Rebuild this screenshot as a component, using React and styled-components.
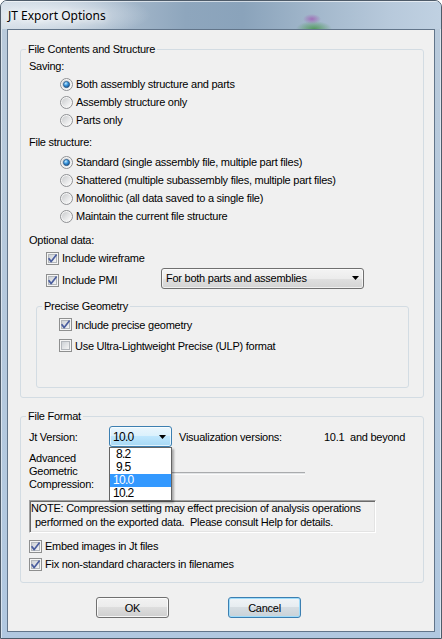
import React from 'react';
import styled, { createGlobalStyle } from 'styled-components';

const GlobalStyle = createGlobalStyle`
  html, body { margin: 0; padding: 0; background: #ffffff; }
  body { font-family: "Liberation Sans", Arial, sans-serif; }
  *, *::before, *::after { box-sizing: border-box; }
`;

const Window = styled.div`
  width: 442px;
  height: 639px;
  border: 1px solid #4e5b69;
  border-radius: 7px 7px 0 0;
  overflow: hidden;
  display: flex;
  flex-direction: column;
  background: #b3c9e0;
`;

const TitleBar = styled.div`
  height: 28px;
  flex: none;
  display: flex;
  align-items: center;
  padding-left: 7px;
  font-family: "Noto Sans", "Liberation Sans", sans-serif;
  font-size: 12px;
  color: #000;
  text-shadow: 0 0 6px rgba(255, 255, 255, 0.95), 0 0 10px rgba(255, 255, 255, 0.8);
  background:
    radial-gradient(ellipse 9px 5px at 311px 18px, rgba(160, 95, 180, 0.8), transparent),
    radial-gradient(ellipse 18px 8px at 313px 28px, rgba(70, 150, 75, 0.85), transparent),
    radial-gradient(ellipse 110px 24px at 40px 14px, rgba(236, 241, 246, 0.95), transparent),
    linear-gradient(90deg, #c9d5e0 0%, #aebfd0 22%, #8ea6bd 42%, #8aa3bb 55%, #a3b8cc 72%, #b7c9db 88%, #c0d1e2 100%);
  box-shadow: inset 0 1px 0 rgba(255, 255, 255, 0.6);
`;

const Frame = styled.div`
  flex: 1;
  display: flex;
  padding: 0 6px 6px;
  background: linear-gradient(180deg, #b9cadb 0%, #b1c8e0 100%);
  box-shadow: inset 1px 0 0 rgba(255, 255, 255, 0.5), inset -1px 0 0 rgba(255, 255, 255, 0.5);
`;

const Client = styled.div`
  flex: 1;
  display: flex;
  flex-direction: column;
  background: #f0f0f0;
  border: 1px solid #62758a;
  padding: 12px 10px 0 12px;
  font-size: 11px;
  letter-spacing: -0.25px;
  color: #000;
`;

const Group = styled.fieldset`
  margin: ${p => p.$mt || 0}px ${p => p.$mr || 0}px 0 ${p => p.$ml || 0}px;
  padding: 0;
  min-width: 0;
  border: 1px solid #d3dce3;
  border-radius: 3px;
`;

const Legend = styled.legend`
  margin-left: 5px;
  padding: 0 2px;
  line-height: 14px;
  font-size: 11px;
`;

const GroupBody = styled.div`
  display: flex;
  flex-direction: column;
  padding: ${p => p.$pt || 0}px 0 ${p => p.$pb || 0}px ${p => p.$pl || 8}px;
`;

const SectionLabel = styled.div`
  height: 18px;
  line-height: 18px;
  margin-top: ${p => p.$mt || 0}px;
`;

const OptionRow = styled.label`
  display: flex;
  align-items: center;
  gap: 3px;
  height: ${p => p.$h || 18}px;
  padding-left: ${p => p.$indent || 0}px;
  margin-top: ${p => p.$mt || 0}px;
  white-space: nowrap;
`;

const OptionList = styled.div`
  display: flex;
  flex-direction: column;
  margin-top: ${p => p.$mt || 0}px;
`;

const PmiRow = styled.div`
  display: flex;
  align-items: center;
  height: 22px;
`;

const PmiCheck = styled.label`
  display: flex;
  align-items: center;
  gap: 3px;
  width: 132px;
  flex: none;
  padding-left: 17px;
  margin-top: 4px;
`;

const Combo = styled.div`
  position: relative;
  width: ${p => p.$w}px;
  height: 21px;
  flex: none;
  display: flex;
  align-items: center;
  justify-content: space-between;
  padding: 0 ${p => p.$pr || 4}px 0 ${p => p.$pl || 3}px;
  border: 1px solid ${p => (p.$hot ? '#3c7fb1' : '#707070')};
  border-radius: 3px;
  background: ${p =>
    p.$hot
      ? 'linear-gradient(180deg, #eaf6fd 0%, #d9f0fc 50%, #bee6fd 50%, #a7d9f5 100%)'
      : 'linear-gradient(180deg, #f4f4f4 0%, #ececec 50%, #e0e0e0 50%, #d4d4d4 100%)'};
  box-shadow: inset 0 0 0 1px rgba(255, 255, 255, 0.65);
  font-size: ${p => (p.$big ? '12px' : '11px')};
  letter-spacing: ${p => (p.$big ? '-0.7px' : '-0.25px')};
`;

const ListBox = styled.ul`
  position: absolute;
  top: 20px;
  left: -1px;
  width: 63px;
  margin: 0;
  padding: 0;
  list-style: none;
  background: #fff;
  border: 1px solid #646464;
  box-shadow: 2px 2px 2px rgba(0, 0, 0, 0.3);
  z-index: 5;
`;

const ListItem = styled.li`
  height: 13px;
  line-height: 13px;
  padding-left: ${p => p.$pl || 3}px;
  font-size: 12px;
  letter-spacing: -0.7px;
  background: ${p => (p.$sel ? '#3399ff' : 'transparent')};
  color: ${p => (p.$sel ? '#fff' : '#000')};
`;

const JtRow = styled.div`
  display: flex;
  align-items: center;
  height: 21px;
  margin-top: 3px;
`;

const FixedLabel = styled.span`
  width: ${p => p.$w}px;
  flex: none;
  margin-left: ${p => p.$ml || 0}px;
  white-space: pre;
`;

const CompressionRow = styled.div`
  display: flex;
  align-items: center;
  margin-top: 5px;
`;

const CompressionLabel = styled.div`
  width: 80px;
  line-height: 13px;
`;

const SliderTrack = styled.div`
  width: 196px;
  height: 3px;
  margin-top: 4px;
  background: #e2e4e6;
  border-top: 1px solid #a9abad;
  border-bottom: 1px solid #fbfbfb;
`;

const NoteBox = styled.div`
  width: 347px;
  height: 33px;
  margin-top: 9px;
  padding: 0 0 0 1px;
  line-height: 14px;
  white-space: pre;
  background: #f0f0f0;
  border-top: 1px solid #a0a0a0;
  border-left: 1px solid #a0a0a0;
  border-bottom: 1px solid #ffffff;
  border-right: 1px solid #ffffff;
  box-shadow: inset 1px 1px 0 #6a6a6a, inset -1px -1px 0 #e3e3e3;
`;

const NoteLine = styled.div`
  padding-left: ${p => p.$indent || 0}px;
`;

const ButtonRow = styled.div`
  display: flex;
  gap: 59px;
  margin: 14px 0 0 76px;
`;

const Button = styled.button`
  width: 73px;
  height: 21px;
  padding: 0;
  font-family: "Liberation Sans", Arial, sans-serif;
  font-size: 11px;
  letter-spacing: -0.25px;
  color: #000;
  border: 1px solid ${p => (p.$default ? '#3c7fb1' : '#707070')};
  border-radius: 3px;
  background: ${p =>
    p.$default
      ? 'linear-gradient(180deg, #f0f4f7 0%, #e6ecf0 50%, #d6dde2 50%, #c9d2d8 100%)'
      : 'linear-gradient(180deg, #f2f2f2 0%, #ebebeb 50%, #dddddd 50%, #cfcfcf 100%)'};
  box-shadow: inset 0 0 0 1px ${p => (p.$default ? '#9edcfb' : 'rgba(255,255,255,0.8)')};
`;

const Radio = ({ checked }) => (
  <svg width="13" height="13" viewBox="0 0 13 13" aria-hidden="true" style={{ flex: 'none' }}>
    <defs>
      <linearGradient id="rFill" x1="0" y1="0" x2="1" y2="1">
        <stop offset="0" stopColor="#c9cbcd" />
        <stop offset="1" stopColor="#fdfdfd" />
      </linearGradient>
      <radialGradient id="rDot" cx="0.38" cy="0.32" r="0.75">
        <stop offset="0" stopColor="#c9eeff" />
        <stop offset="0.45" stopColor="#3c98df" />
        <stop offset="1" stopColor="#15497f" />
      </radialGradient>
    </defs>
    <circle cx="6.5" cy="6.5" r="6" fill="#f6f6f6" stroke="#8e9093" />
    <circle cx="6.5" cy="6.5" r="4.6" fill="url(#rFill)" />
    {checked && <circle cx="6.5" cy="6.5" r="3.1" fill="url(#rDot)" stroke="#1d4c7c" strokeWidth="0.7" />}
  </svg>
);

const Check = ({ checked }) => (
  <svg width="13" height="13" viewBox="0 0 13 13" aria-hidden="true" style={{ flex: 'none' }}>
    <defs>
      <linearGradient id="cFill" x1="0" y1="0" x2="1" y2="1">
        <stop offset="0" stopColor="#cbcfd4" />
        <stop offset="1" stopColor="#f7f7f7" />
      </linearGradient>
    </defs>
    <rect x="0.5" y="0.5" width="12" height="12" fill="#f5f5f5" stroke="#8e8f8f" />
    <rect x="2.5" y="2.5" width="8" height="8" fill="url(#cFill)" stroke="#b3b7bc" />
    {checked && (
      <path d="M2.6 6.3 L5.2 9.6 L10.6 2.6" fill="none" stroke="#4a5d9e" strokeWidth="1.7" strokeLinejoin="round" />
    )}
  </svg>
);

const Arrow = () => (
  <svg width="7" height="4" viewBox="0 0 7 4" aria-hidden="true" style={{ flex: 'none' }}>
    <path d="M0 0 H7 L3.5 4 Z" fill="#000" />
  </svg>
);

export default function App() {
  return (
    <>
      <GlobalStyle />
      <Window>
        <TitleBar>JT Export Options</TitleBar>
        <Frame>
          <Client>
            <Group>
              <Legend>File Contents and Structure</Legend>
              <GroupBody $pt={1} $pb={9}>
                <SectionLabel>Saving:</SectionLabel>
                <OptionList>
                  <OptionRow $indent={31}><Radio checked />Both assembly structure and parts</OptionRow>
                  <OptionRow $indent={31}><Radio />Assembly structure only</OptionRow>
                  <OptionRow $indent={31}><Radio />Parts only</OptionRow>
                </OptionList>
                <SectionLabel $mt={4}>File structure:</SectionLabel>
                <OptionList $mt={2}>
                  <OptionRow $indent={31}><Radio checked />Standard (single assembly file, multiple part files)</OptionRow>
                  <OptionRow $indent={31}><Radio />Shattered (multiple subassembly files, multiple part files)</OptionRow>
                  <OptionRow $indent={31}><Radio />Monolithic (all data saved to a single file)</OptionRow>
                  <OptionRow $indent={31}><Radio />Maintain the current file structure</OptionRow>
                </OptionList>
                <SectionLabel $mt={6}>Optional data:</SectionLabel>
                <OptionRow $indent={17}><Check checked />Include wireframe</OptionRow>
                <PmiRow>
                  <PmiCheck><Check checked />Include PMI</PmiCheck>
                  <Combo $w={203} $pl={4} $pr={4}>
                    <span>For both parts and assemblies</span>
                    <Arrow />
                  </Combo>
                </PmiRow>
                <Group $mt={10} $ml={7} $mr={14}>
                  <Legend>Precise Geometry</Legend>
                  <GroupBody $pt={1} $pb={31} $pl={22}>
                    <OptionRow $h={21}><Check checked />Include precise geometry</OptionRow>
                    <OptionRow $h={21}><Check />Use Ultra-Lightweight Precise (ULP) format</OptionRow>
                  </GroupBody>
                </Group>
              </GroupBody>
            </Group>

            <Group $mt={11}>
              <Legend>File Format</Legend>
              <GroupBody $pb={9}>
                <JtRow>
                  <FixedLabel $w={80}>Jt Version:</FixedLabel>
                  <Combo $w={63} $hot $big $pl={3} $pr={5}>
                    <span>10.0</span>
                    <Arrow />
                    <ListBox>
                      <ListItem $pl={6}>8.2</ListItem>
                      <ListItem $pl={6}>9.5</ListItem>
                      <ListItem $sel>10.0</ListItem>
                      <ListItem>10.2</ListItem>
                    </ListBox>
                  </Combo>
                  <FixedLabel $w={145} $ml={7}>Visualization versions:</FixedLabel>
                  <FixedLabel $w={90}>{'10.1  and beyond'}</FixedLabel>
                </JtRow>
                <CompressionRow>
                  <CompressionLabel>
                    Advanced<br />Geometric<br />Compression:
                  </CompressionLabel>
                  <SliderTrack />
                </CompressionRow>
                <NoteBox>
                  <NoteLine>NOTE: Compression setting may effect precision of analysis operations</NoteLine>
                  <NoteLine $indent={4}>{'performed on the exported data.  Please consult Help for details.'}</NoteLine>
                </NoteBox>
                <OptionRow $mt={4}><Check checked />Embed images in Jt files</OptionRow>
                <OptionRow><Check checked />Fix non-standard characters in filenames</OptionRow>
              </GroupBody>
            </Group>

            <ButtonRow>
              <Button>OK</Button>
              <Button $default>Cancel</Button>
            </ButtonRow>
          </Client>
        </Frame>
      </Window>
    </>
  );
}
